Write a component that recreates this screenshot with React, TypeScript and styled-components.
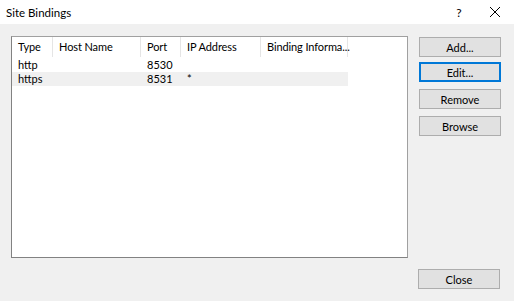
import React from 'react';
import styled, { createGlobalStyle } from 'styled-components';

const GlobalStyle = createGlobalStyle`
  html, body {
    margin: 0;
    padding: 0;
    background: #f0f0f0;
  }
  body {
    font-family: Lato, "Noto Sans", sans-serif;
    font-size: 11px;
    color: #000;
  }
`;

interface Binding {
  type: string;
  host: string;
  port: string;
  ip: string;
  info: string;
}

const bindings: Binding[] = [
  { type: 'http', host: '', port: '8530', ip: '', info: '' },
  { type: 'https', host: '', port: '8531', ip: '*', info: '' },
];

const columns = [
  { label: 'Type', width: 41 },
  { label: 'Host Name', width: 88 },
  { label: 'Port', width: 40 },
  { label: 'IP Address', width: 80 },
  { label: 'Binding Informa...', width: 87 },
];

const App: React.FC = () => {
  return (
    <Dialog>
      <GlobalStyle />
      <TitleBar>
        <span className="title">Site Bindings</span>
        <TitleButton>?</TitleButton>
        <TitleButton>
          <svg width="12" height="12" viewBox="0 0 12 12">
            <path d="M1 1 L11 11 M11 1 L1 11" stroke="#000" strokeWidth="1" fill="none" />
          </svg>
        </TitleButton>
      </TitleBar>
      <Body>
        <Main>
          <ListBox>
            <HeaderRow>
              {columns.map((c) => (
                <HeaderCell key={c.label} $width={c.width}>
                  {c.label}
                </HeaderCell>
              ))}
            </HeaderRow>
            {bindings.map((b, i) => (
              <Row key={b.type} $selected={i === 1}>
                <Cell $width={columns[0].width}>{b.type}</Cell>
                <Cell $width={columns[1].width}>{b.host}</Cell>
                <Cell $width={columns[2].width}>{b.port}</Cell>
                <Cell $width={columns[3].width}>{b.ip}</Cell>
                <Cell $width={columns[4].width}>{b.info}</Cell>
              </Row>
            ))}
          </ListBox>
          <ButtonColumn>
            <Button>Add...</Button>
            <Button $focused>Edit...</Button>
            <Button>Remove</Button>
            <Button>Browse</Button>
          </ButtonColumn>
        </Main>
        <Footer>
          <Button>Close</Button>
        </Footer>
      </Body>
    </Dialog>
  );
};

export default App;

const Dialog = styled.div`
  width: 514px;
  height: 301px;
  display: flex;
  flex-direction: column;
  background: #f0f0f0;
  overflow: hidden;
`;

const TitleBar = styled.div`
  height: 24px;
  background: #fff;
  display: flex;
  align-items: center;
  padding-left: 6px;

  .title {
    flex: 1;
    font-size: 11.5px;
  }
`;

const TitleButton = styled.div`
  width: 34px;
  height: 24px;
  display: flex;
  align-items: center;
  justify-content: center;
  font-size: 12px;
  margin-right: 2px;
`;

const Body = styled.div`
  flex: 1;
  display: flex;
  flex-direction: column;
  padding: 12px 13px 12px 11px;
`;

const Main = styled.div`
  display: flex;
  gap: 11px;
`;

const ListBox = styled.div`
  width: 397px;
  height: 222px;
  box-sizing: border-box;
  background: #fff;
  border: 1px solid #828282;
  border-right-color: #a0a0a0;
  border-top-color: #a0a0a0;
`;

const HeaderRow = styled.div`
  display: flex;
  height: 20px;
  margin-bottom: 1px;
`;

const HeaderCell = styled.div<{ $width: number }>`
  width: ${(p) => p.$width}px;
  flex-shrink: 0;
  box-sizing: border-box;
  padding-left: 6px;
  border-right: 1px solid #e5e5e5;
  line-height: 20px;
  white-space: nowrap;
  letter-spacing: -0.1px;
`;

const Row = styled.div<{ $selected?: boolean }>`
  display: flex;
  width: 336px;
  height: 14px;
  background: ${(p) => (p.$selected ? '#f0f0f0' : 'transparent')};
`;

const Cell = styled.div<{ $width: number }>`
  width: ${(p) => p.$width}px;
  box-sizing: border-box;
  padding-left: 6px;
  line-height: 14px;
  white-space: nowrap;
`;

const ButtonColumn = styled.div`
  display: flex;
  flex-direction: column;
  gap: 7px;
  padding-top: 1px;
`;

const Button = styled.button<{ $focused?: boolean }>`
  width: 82px;
  height: 20px;
  box-sizing: border-box;
  margin: 0;
  margin-top: ${(p) => (p.$focused ? '-2px' : '0')};
  padding: 0;
  font-family: inherit;
  font-size: 11px;
  color: #000;
  background: #e1e1e1;
  border: 1px solid ${(p) => (p.$focused ? '#0078d7' : '#adadad')};
  box-shadow: ${(p) => (p.$focused ? 'inset 0 0 0 1px #0078d7' : 'none')};
`;

const Footer = styled.div`
  display: flex;
  justify-content: flex-end;
  margin-top: auto;
  padding-right: 1px;
`;
